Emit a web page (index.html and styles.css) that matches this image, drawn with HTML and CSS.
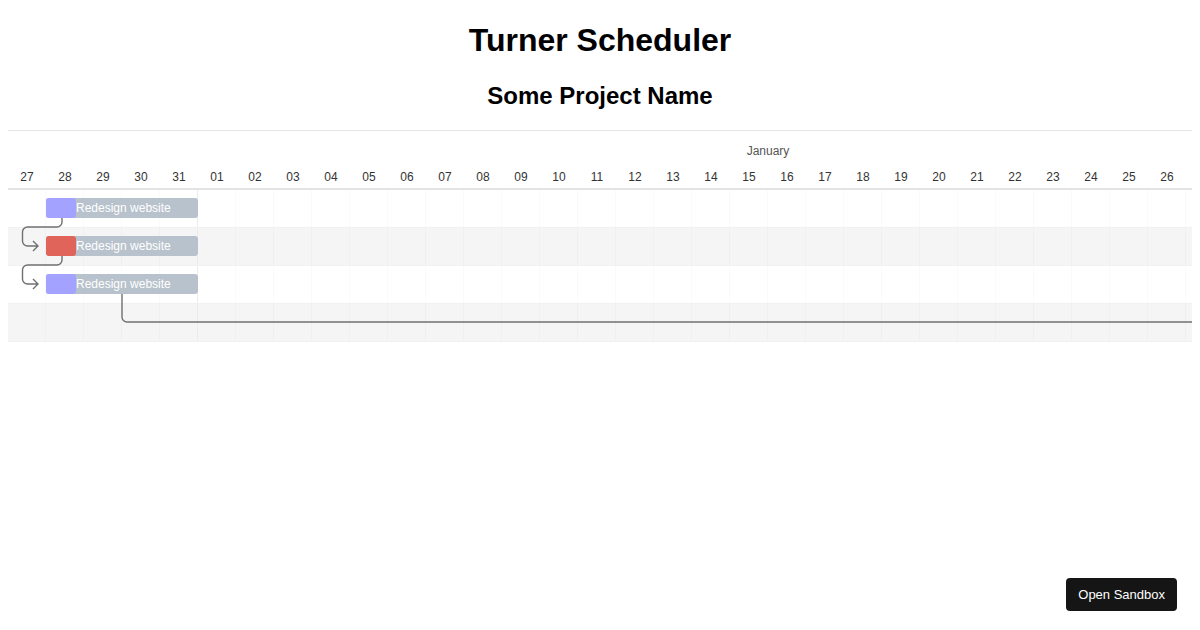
FILE: index.html
```html
<!DOCTYPE html>
<html lang="en">
<head>
    <meta charset="UTF-8">
    <meta name="viewport" content="width=device-width, initial-scale=1.0">
    <title>Turner Scheduler</title>
    <link rel="stylesheet" href="styles.css">
</head>
<body>
    <h1>Turner Scheduler</h1>
    <h2>Some Project Name</h2>

    <div class="gantt">
        <div class="gantt-header">
            <div class="month-row">
                <span class="month">January</span>
            </div>
            <div class="day-row">
                <span class="day">27</span>
                <span class="day">28</span>
                <span class="day">29</span>
                <span class="day">30</span>
                <span class="day">31</span>
                <span class="day">01</span>
                <span class="day">02</span>
                <span class="day">03</span>
                <span class="day">04</span>
                <span class="day">05</span>
                <span class="day">06</span>
                <span class="day">07</span>
                <span class="day">08</span>
                <span class="day">09</span>
                <span class="day">10</span>
                <span class="day">11</span>
                <span class="day">12</span>
                <span class="day">13</span>
                <span class="day">14</span>
                <span class="day">15</span>
                <span class="day">16</span>
                <span class="day">17</span>
                <span class="day">18</span>
                <span class="day">19</span>
                <span class="day">20</span>
                <span class="day">21</span>
                <span class="day">22</span>
                <span class="day">23</span>
                <span class="day">24</span>
                <span class="day">25</span>
                <span class="day">26</span>
                <span class="day"></span>
            </div>
        </div>

        <div class="gantt-body">
            <div class="task-row">
                <div class="bar">
                    <div class="bar-progress"></div>
                    <span class="bar-label">Redesign website</span>
                </div>
            </div>
            <div class="task-row">
                <div class="bar">
                    <div class="bar-progress critical"></div>
                    <span class="bar-label">Redesign website</span>
                </div>
            </div>
            <div class="task-row">
                <div class="bar">
                    <div class="bar-progress"></div>
                    <span class="bar-label">Redesign website</span>
                </div>
            </div>
            <div class="task-row"></div>

            <!-- dependency arrows -->
            <svg class="arrows" viewBox="0 0 1184 152" width="1184" height="152">
                <path d="M 54 28 V 32 A 5 5 0 0 1 49 37 H 19.5 A 5 5 0 0 0 14.5 42 V 51 A 5 5 0 0 0 19.5 56 H 30 M 25 51 L 30 56 L 25 61" />
                <path d="M 54 66 V 70 A 5 5 0 0 1 49 75 H 19.5 A 5 5 0 0 0 14.5 80 V 89 A 5 5 0 0 0 19.5 94 H 30 M 25 89 L 30 94 L 25 99" />
                <path d="M 114 104 V 127 A 5 5 0 0 0 119 132 H 1190" />
            </svg>
        </div>
    </div>

    <button class="sandbox-btn">Open Sandbox</button>
</body>
</html>
```

FILE: styles.css
```css
body {
    font-family: "Liberation Sans", Arial, sans-serif;
    margin: 8px;
    color: #000;
    background: #fff;
}

h1 {
    font-size: 32px;
    text-align: center;
    margin: 14px 0 23px;
}

h2 {
    font-size: 24px;
    text-align: center;
    margin: 20px 0 20px;
}

.gantt {
    border-top: 1px solid #e6e6e6;
    overflow: hidden;
}

.gantt-header {
    height: 57px;
    border-bottom: 2px solid #e3e3e3;
    font-size: 12px;
}

.month-row {
    display: flex;
    padding-top: 13px;
    line-height: 14px;
    height: 14px;
}

.month {
    margin-left: 190px;
    width: 1140px;
    flex-shrink: 0;
    text-align: center;
    color: #555;
}

.day-row {
    display: flex;
    padding-top: 12px;
    line-height: 14px;
}

.day {
    width: 38px;
    flex-shrink: 0;
    text-align: center;
    color: #333;
}

.gantt-body {
    position: relative;
    background-image:
        linear-gradient(#ececec, #ececec),
        linear-gradient(to right, transparent 37px, rgba(0, 0, 0, 0.018) 37px),
        repeating-linear-gradient(to bottom, #fff 0, #fff 38px, #f5f5f5 38px, #f5f5f5 76px);
    background-size: 1px 100%, 38px 100%, 100% 100%;
    background-position: 189px 0, 0 0, 0 0;
    background-repeat: no-repeat, repeat-x, no-repeat;
}

.task-row {
    position: relative;
    height: 38px;
    box-sizing: border-box;
    border-bottom: 1px solid #f0f1f3;
}

.bar {
    position: absolute;
    left: 38px;
    top: 8px;
    width: 152px;
    height: 20px;
    border-radius: 3px;
    background: #b8c2cc;
}

.bar-progress {
    width: 30px;
    height: 20px;
    border-radius: 3px;
    background: #a3a3ff;
}

.bar-progress.critical {
    background: #e0645a;
}

.bar-label {
    position: absolute;
    left: 30px;
    top: 0;
    line-height: 20px;
    font-size: 12px;
    color: #fff;
    white-space: nowrap;
}

.arrows {
    position: absolute;
    left: 0;
    top: 0;
    fill: none;
    stroke: #707070;
    stroke-width: 1.4;
}

.sandbox-btn {
    position: fixed;
    right: 23px;
    bottom: 19px;
    padding: 0 12px;
    height: 33px;
    background: #151515;
    color: #fff;
    border: none;
    border-radius: 4px;
    font-family: "Liberation Sans", Arial, sans-serif;
    font-size: 13px;
    cursor: pointer;
}
```
